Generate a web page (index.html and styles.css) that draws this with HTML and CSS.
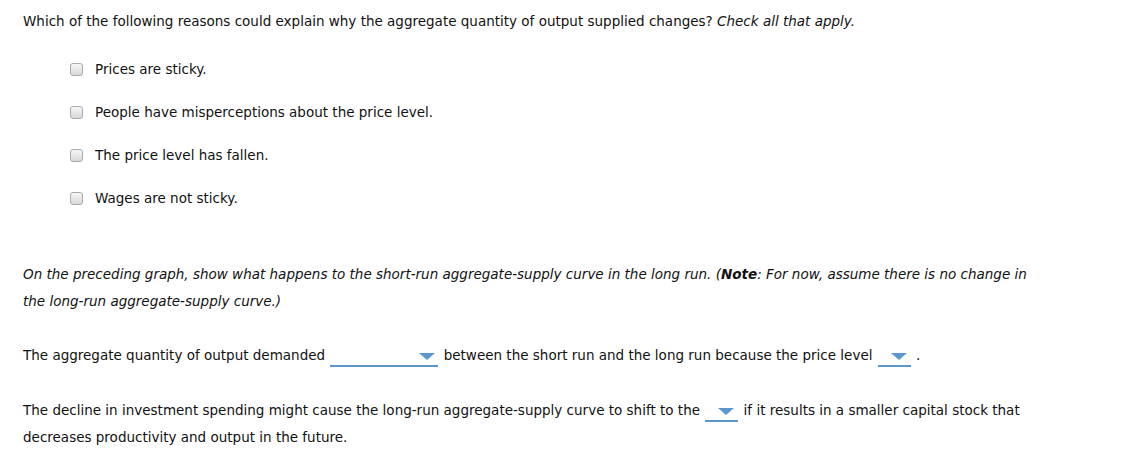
FILE: index.html
```html
<!DOCTYPE html>
<html>
<head>
<meta charset="utf-8">
<link rel="stylesheet" href="styles.css">
</head>
<body>
<div class="page">
  <p class="question">Which of the following reasons could explain why the aggregate quantity of output supplied changes? <em>Check all that apply.</em></p>
  <ul class="options">
    <li class="option"><span class="box"></span><span>Prices are sticky.</span></li>
    <li class="option"><span class="box"></span><span>People have misperceptions about the price level.</span></li>
    <li class="option"><span class="box"></span><span>The price level has fallen.</span></li>
    <li class="option"><span class="box"></span><span>Wages are not sticky.</span></li>
  </ul>
  <p class="note"><em>On the preceding graph, show what happens to the short-run aggregate-supply curve in the long run. (<strong>Note</strong>: For now, assume there is no change in the long-run aggregate-supply curve.)</em></p>
  <p class="fill">The aggregate quantity of output demanded <span class="dd dd-wide"><span class="tri"></span></span> between the short run and the long run because the price level <span class="dd dd-narrow"><span class="tri"></span></span> .</p>
  <p class="fill last">The decline in investment spending might cause the long-run aggregate-supply curve to shift to the <span class="dd dd-narrow"><span class="tri"></span></span> if it results in a smaller capital stock that decreases productivity and output in the future.</p>
</div>
</body>
</html>
```
FILE: styles.css
```css
html, body {
  margin: 0;
  padding: 0;
  background: #ffffff;
}
body {
  padding: 8px 0 0 23px;
  font-family: "DejaVu Sans", Verdana, sans-serif;
  font-size: 13.5px;
  line-height: 27px;
  color: #111111;
}
.page {
  width: 1025px;
}
p {
  margin: 0;
}
.question {
  margin-bottom: 21px;
}
.options {
  list-style: none;
  margin: 0;
  padding: 0 0 0 47px;
  display: flex;
  flex-direction: column;
  gap: 16px;
}
.option {
  display: flex;
  align-items: center;
  gap: 12px;
  height: 27px;
}
.box {
  width: 11px;
  height: 11px;
  border: 1px solid #a9a9a9;
  border-radius: 3px;
  background: linear-gradient(#f6f6f6, #d9d9d9);
  flex: none;
}
.note {
  margin-top: 49px;
}
.note strong {
  font-weight: bold;
}
.fill {
  margin-top: 27px;
}
.fill.last {
  margin-top: 28px;
}
.dd {
  display: inline-block;
  position: relative;
  height: 17px;
  vertical-align: -7px;
  border-bottom: 2px solid #5b97cc;
  margin: 0 1px;
}
.dd-wide {
  width: 108px;
}
.dd-narrow {
  width: 33px;
}
.tri {
  position: absolute;
  right: 3px;
  top: 5px;
  width: 0;
  height: 0;
  border-left: 8px solid transparent;
  border-right: 8px solid transparent;
  border-top: 7px solid #5b97cc;
}
.dd-narrow .tri {
  right: 4px;
}
```
